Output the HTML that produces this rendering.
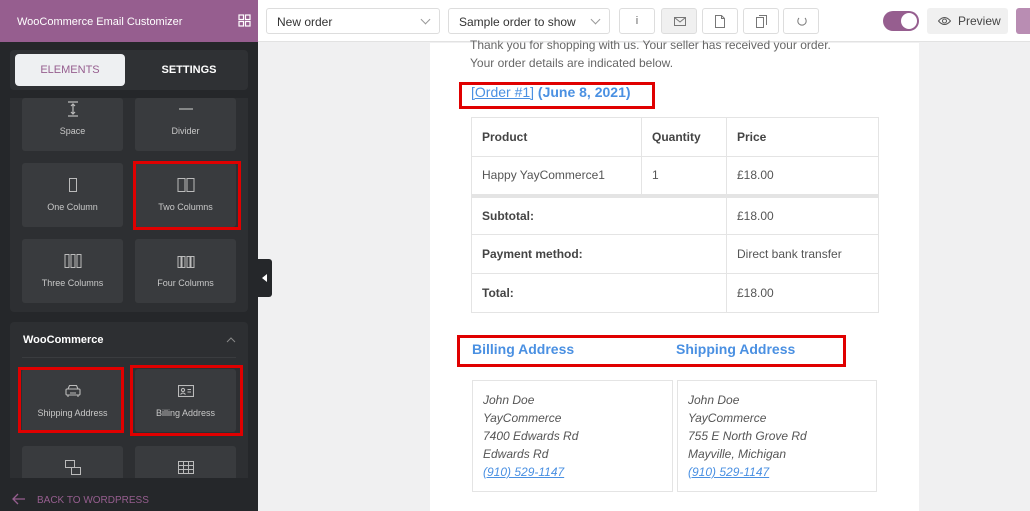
<!DOCTYPE html>
<html><head><meta charset="utf-8"><style>
*{box-sizing:border-box;margin:0;padding:0}
body{width:1030px;height:511px;overflow:hidden;position:relative;font-family:"Liberation Sans",sans-serif;background:#f0f0f1}
.a{position:absolute}
.card{position:absolute;background:#393b3e;border-radius:3px;color:#c8c8c8;font-size:9px;text-align:center}
.card svg{position:absolute;left:50%;top:15px;transform:translateX(-50%)}
.card .lb{position:absolute;left:0;right:0;top:39px}
.red{position:absolute;border:3px solid #e00000}
.btn{position:absolute;top:8px;height:26px;width:36px;border:1px solid #ddd;border-radius:3px;background:#fff;color:#666;font-size:11px;text-align:center;line-height:24px}
.btn svg{position:absolute;left:12px;top:6px}
.sel{position:absolute;top:8px;height:26px;border:1px solid #ddd;border-radius:3px;background:#fff;font-size:12px;color:#333;padding:6px 10px}
.sel:after{content:"";position:absolute;right:10px;top:7px;width:6px;height:6px;border-right:1px solid #999;border-bottom:1px solid #999;transform:rotate(45deg)}
td{border:1px solid #e4e4e4;font-size:12px;color:#555;padding:0 10px;height:39px}
th{border:1px solid #e4e4e4;font-size:12px;color:#444;padding:0 10px;height:39px;text-align:left}
.addr{position:absolute;top:380px;height:112px;border:1px solid #e4e4e4;font-style:italic;font-size:12px;color:#555;line-height:18px;padding:10px}
</style></head><body>
<div class="a" style="left:0;top:0;width:258px;height:511px;background:#25272a"></div>
<div class="a" style="left:0;top:0;width:258px;height:42px;background:#965e8f;color:#fff;font-size:11px;padding:16px 17px">WooCommerce Email Customizer</div>
<div class="a" style="left:238px;top:14px;width:13px;height:13px">
<svg width="13" height="13"><g fill="none" stroke="#fff" stroke-width="1.2"><rect x="1" y="1" width="4.5" height="4.5"/><rect x="7.5" y="1" width="4.5" height="4.5"/><rect x="1" y="7.5" width="4.5" height="4.5"/><rect x="7.5" y="7.5" width="4.5" height="4.5"/></g></svg></div>
<div class="a" style="left:10px;top:50px;width:238px;height:40px;background:#2f3134;border-radius:4px"></div>
<div class="a" style="left:15px;top:54px;width:110px;height:32px;background:#eef0f2;border-radius:4px;color:#965e8f;font-size:11px;text-align:center;line-height:32px">ELEMENTS</div>
<div class="a" style="left:135px;top:54px;width:108px;height:32px;color:#fff;font-size:11px;text-align:center;line-height:32px;font-weight:bold">SETTINGS</div>
<div class="a" style="left:10px;top:98px;width:238px;height:214px;background:#2d2f32;border-radius:0 0 4px 4px"></div>
<div class="card" style="left:22px;top:98px;width:101px;height:53px"><svg width="12" height="16" style="top:3px"><g stroke="#bbb" fill="none" stroke-width="1.2"><path d="M1 1H11M1 15H11M6 3V13M4 5L6 3L8 5M4 11L6 13L8 11"/></g></svg><div class="lb" style="top:28px">Space</div></div>
<div class="card" style="left:135px;top:98px;width:101px;height:53px"><svg width="14" height="4" style="top:9px"><path d="M0 2H14" stroke="#bbb" stroke-width="1.2"/></svg><div class="lb" style="top:28px">Divider</div></div>
<div class="card" style="left:22px;top:163px;width:101px;height:64px"><svg width="8" height="14"><rect x=".5" y=".5" width="7" height="13" fill="none" stroke="#bbb"/></svg><div class="lb">One Column</div></div>
<div class="card" style="left:135px;top:163px;width:101px;height:64px"><svg width="17" height="14"><g fill="none" stroke="#bbb"><rect x=".5" y=".5" width="7" height="13"/><rect x="9.5" y=".5" width="7" height="13"/></g></svg><div class="lb">Two Columns</div></div>
<div class="card" style="left:22px;top:239px;width:101px;height:64px"><svg width="17" height="14"><g fill="none" stroke="#bbb"><rect x=".5" y=".5" width="4" height="13"/><rect x="6.5" y=".5" width="4" height="13"/><rect x="12.5" y=".5" width="4" height="13"/></g></svg><div class="lb">Three Columns</div></div>
<div class="card" style="left:135px;top:239px;width:101px;height:64px"><svg width="17" height="12" style="top:17px"><g fill="none" stroke="#bbb"><rect x=".5" y=".5" width="3" height="11"/><rect x="4.5" y=".5" width="3" height="11"/><rect x="9.5" y=".5" width="3" height="11"/><rect x="13.5" y=".5" width="3" height="11"/></g></svg><div class="lb">Four Columns</div></div>
<div class="red" style="left:133px;top:161px;width:108px;height:69px"></div>
<div class="a" style="left:10px;top:322px;width:238px;height:160px;background:#2d2f32;border-radius:4px"></div>
<div class="a" style="left:23px;top:334px;color:#fff;font-size:11px;font-weight:bold">WooCommerce</div>
<svg class="a" style="left:226px;top:337px" width="10" height="6"><path d="M1 5L5 1L9 5" fill="none" stroke="#888"/></svg>
<div class="a" style="left:22px;top:357px;width:214px;height:1px;background:#3a3c3f"></div>
<div class="card" style="left:22px;top:369px;width:101px;height:63px"><svg width="16" height="14"><g fill="none" stroke="#bbb" stroke-width="1.1"><path d="M3 5L4.5 1.5H11.5L13 5"/><rect x="1" y="5" width="14" height="6" rx="1"/><path d="M3 11V13M13 11V13M5 9H11"/></g></svg><div class="lb">Shipping Address</div></div>
<div class="card" style="left:135px;top:369px;width:101px;height:63px"><svg width="16" height="12" style="top:16px"><g fill="none" stroke="#bbb" stroke-width="1.1"><rect x=".5" y=".5" width="15" height="11"/><circle cx="5" cy="5" r="1.6"/><path d="M2.5 9.5Q5 6.5 7.5 9.5M9.5 4.5H13M9.5 7H13"/></g></svg><div class="lb">Billing Address</div></div>
<div class="card" style="left:22px;top:446px;width:101px;height:40px"><svg width="16" height="16" style="top:14px"><g fill="none" stroke="#bbb"><rect x=".5" y=".5" width="9" height="7"/><rect x="6.5" y="7.5" width="9" height="7"/></g></svg></div>
<div class="card" style="left:135px;top:446px;width:101px;height:40px"><svg width="16" height="13" style="top:15px"><g fill="none" stroke="#bbb"><rect x=".5" y=".5" width="15" height="12"/><path d="M.5 4.5H15.5M.5 8.5H15.5M5.5 .5V12.5M10.5 .5V12.5"/></g></svg></div>
<div class="red" style="left:18px;top:367px;width:106px;height:66px"></div>
<div class="red" style="left:130px;top:365px;width:113px;height:71px"></div>
<div class="a" style="left:0;top:478px;width:258px;height:33px;background:#25272a"></div>
<svg class="a" style="left:12px;top:493px" width="14" height="12"><path d="M13 6H1M6 1L1 6L6 11" fill="none" stroke="#965e8f" stroke-width="1.3"/></svg>
<div class="a" style="left:37px;top:495px;color:#965e8f;font-size:10px">BACK TO WORDPRESS</div>
<div class="a" style="left:258px;top:259px;width:14px;height:38px;background:#25272a;border-radius:0 3px 3px 0"><svg class="a" style="left:4px;top:15px" width="5" height="8"><path d="M5 0V8L0 4Z" fill="#fff"/></svg></div>
<div class="a" style="left:258px;top:0;width:772px;height:42px;background:#fff;border-bottom:1px solid #e2e2e2"></div>
<div class="sel" style="left:266px;width:174px">New order</div>
<div class="sel" style="left:448px;width:162px">Sample order to show</div>
<div class="btn" style="left:619px">i</div>
<div class="btn" style="left:661px;background:#f0f0f0"><svg width="12" height="12" style="top:6px"><g fill="none" stroke="#777"><rect x=".5" y="2.5" width="11" height="8"/><path d="M.5 2.5L6 7L11.5 2.5"/></g></svg></div>
<div class="btn" style="left:702px"><svg width="10" height="13"><path d="M.5 .5H6.5L9.5 3.5V12.5H.5Z M6.5 .5V3.5H9.5" fill="none" stroke="#777"/></svg></div>
<div class="btn" style="left:743px"><svg width="11" height="13"><g fill="none" stroke="#777"><rect x=".5" y="2.5" width="7" height="10"/><path d="M3 .5H10.5V10"/></g></svg></div>
<div class="btn" style="left:783px"><svg width="12" height="12"><path d="M3 3A4.2 4.2 0 1 0 9 3" fill="none" stroke="#777"/></svg></div>
<div class="a" style="left:883px;top:11px;width:36px;height:20px;background:#965e8f;border-radius:10px"><div class="a" style="left:18px;top:2px;width:16px;height:16px;background:#fff;border-radius:50%"></div></div>
<div class="a" style="left:927px;top:8px;width:81px;height:26px;background:#f0f0f0;border-radius:3px;font-size:12px;color:#444;line-height:26px;padding-left:31px">Preview</div>
<svg class="a" style="left:938px;top:16px" width="13" height="10"><g fill="none" stroke="#555"><path d="M.5 5Q6.5 -2 12.5 5Q6.5 12 .5 5Z"/><circle cx="6.5" cy="5" r="2"/></g></svg>
<div class="a" style="left:1016px;top:8px;width:14px;height:26px;background:#b98db3;border-radius:3px 0 0 3px"></div>
<div class="a" style="left:430px;top:43px;width:489px;height:468px;background:#fff"></div>
<div class="a" style="left:470px;top:36px;font-size:12px;color:#666;line-height:18px">Thank you for shopping with us. Your seller has received your order.<br>Your order details are indicated below.</div>
<div class="a" style="left:471px;top:84px;font-size:14px;color:#4a90e2"><span style="text-decoration:underline">[Order #1]</span> <b>(June 8, 2021)</b></div>
<div class="red" style="left:459px;top:82px;width:196px;height:27px"></div>
<table class="a" style="left:471px;top:117px;width:408px;border-collapse:collapse">
<tr><th style="width:170px">Product</th><th style="width:85px">Quantity</th><th>Price</th></tr>
<tr><td>Happy YayCommerce1</td><td>1</td><td>£18.00</td></tr>
<tr><th colspan="2" style="border-top:4px solid #e4e4e4">Subtotal:</th><td style="border-top:4px solid #e4e4e4">£18.00</td></tr>
<tr><th colspan="2">Payment method:</th><td>Direct bank transfer</td></tr>
<tr><th colspan="2">Total:</th><td>£18.00</td></tr>
</table>
<div class="a" style="left:472px;top:341px;font-size:14px;font-weight:bold;color:#4a90e2">Billing Address</div>
<div class="a" style="left:676px;top:341px;font-size:14px;font-weight:bold;color:#4a90e2">Shipping Address</div>
<div class="red" style="left:457px;top:335px;width:389px;height:32px"></div>
<div class="addr" style="left:472px;width:201px">John Doe<br>YayCommerce<br>7400 Edwards Rd<br>Edwards Rd<br><span style="color:#4a90e2;text-decoration:underline">(910) 529-1147</span></div>
<div class="addr" style="left:677px;width:200px">John Doe<br>YayCommerce<br>755 E North Grove Rd<br>Mayville, Michigan<br><span style="color:#4a90e2;text-decoration:underline">(910) 529-1147</span></div>
</body></html>
